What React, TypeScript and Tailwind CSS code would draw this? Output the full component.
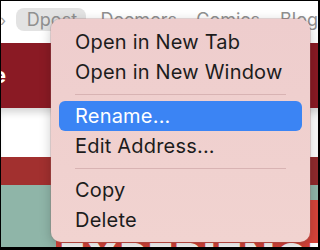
import React from 'react';

const items = [
  { label: 'Open in New Tab' },
  { label: 'Open in New Window' },
  { sep: true },
  { label: 'Rename...', active: true },
  { label: 'Edit Address...' },
  { sep: true },
  { label: 'Copy' },
  { label: 'Delete' },
];

const ContextMenu = () => {
  return (
    <div className="absolute left-[50px] top-[18px] w-[259px] h-[223px] rounded-[10px] bg-gradient-to-b from-[#eecdcd] to-[#f1d3d0] shadow-[0_3px_12px_rgba(0,0,0,0.22),0_0_0_1px_rgba(180,120,120,0.25)] px-[8px] pt-[8px] flex flex-col">
      {items.map((it, i) =>
        it.sep ? (
          <div key={i} className="h-[14px] shrink-0 flex items-center px-[16px]">
            <div className="h-px w-full bg-[#d8b3b3]" />
          </div>
        ) : (
          <div
            key={i}
            className={
              it.active
                ? 'h-[30px] shrink-0 flex items-center pl-[16px] rounded-[6px] bg-[#3b84f4] text-white'
                : 'h-[30px] shrink-0 flex items-center pl-[16px] text-[#1c1c1c]'
            }
          >
            <span className="text-[20px] leading-none tracking-[0.2px]">{it.label}</span>
          </div>
        )
      )}
    </div>
  );
};

export default function App() {
  return (
    <div
      className="relative w-[320px] h-[250px] overflow-hidden bg-black border-t border-l border-r-2 border-b-[3px] border-black"
      style={{ fontFamily: 'Inter, "Noto Sans", sans-serif' }}
    >
      <div className="flex flex-col h-full bg-white">
        <nav className="h-[42px] shrink-0 flex items-start pt-[7px] bg-white text-[#909090] text-[18px]">
          <span className="w-[17px] -ml-[1px] h-[23px] flex items-center text-[#a0a0a0] text-[16px]">›</span>
          <div className="w-[75px] h-[23px] pl-[11px] flex items-center rounded-[8px] bg-[#e3e3e3]">Dpost</div>
          <div className="w-[103px] h-[23px] ml-[14px] flex items-center">Deemers</div>
          <div className="w-[90px] h-[23px] flex items-center">Comics</div>
          <div className="h-[23px] flex items-center">Blog</div>
        </nav>
        <div className="h-[65px] shrink-0 bg-[#8a1a24] flex items-center overflow-hidden">
          <span className="-ml-[14px] text-white text-[22px] font-bold">le</span>
        </div>
        <div className="h-[49px] shrink-0 bg-white shadow-[inset_0_8px_8px_-4px_rgba(0,0,0,0.18)]" />
        <div className="h-[28px] shrink-0 flex">
          <div className="flex-1 bg-[#a2302f]" />
          <div className="w-[12px] bg-[#8f2a2d]" />
        </div>
        <div className="flex-1 min-h-0 overflow-hidden bg-[#8fb5a8] pt-[15px] pl-[55px]">
          <div className="h-full overflow-hidden bg-[#d6443a] text-white font-black text-[40px] leading-none pl-[4px] pt-[38px] whitespace-nowrap tracking-wider">
            EXPERIENCE
          </div>
        </div>
      </div>
      <ContextMenu />
    </div>
  );
}
